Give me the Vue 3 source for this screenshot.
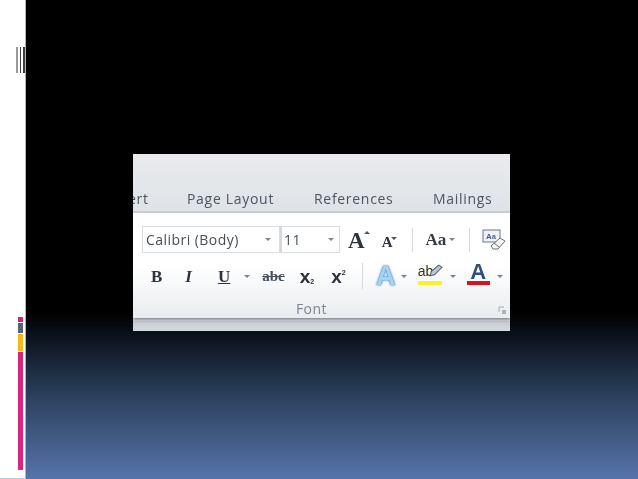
<script setup>
const tabs = [
  { label: 'ert', w: 59 },
  { label: 'Page Layout', w: 127 },
  { label: 'References', w: 119 },
  { label: 'Mailings', w: 70 },
]
</script>

<template>
  <div class="slide">
    <aside class="rail">
      <div class="stripes"><i></i><i></i><i></i></div>
      <div class="bars">
        <i class="b1"></i><i class="b2"></i><i class="b3"></i><i class="b4"></i>
      </div>
    </aside>
    <main class="stage">
      <section class="ribbon">
        <div class="tabs">
          <span v-for="t in tabs" :key="t.label" class="tab" :style="{ width: t.w + 'px' }">{{ t.label }}</span>
        </div>
        <div class="panel">
          <div class="row r1">
            <div class="combo font"><span>Calibri (Body)</span><b class="caret"></b></div>
            <div class="combo size"><span>11</span><b class="caret"></b></div>
            <span class="big grow">A<i class="tri up"></i></span>
            <span class="big shrink">A<i class="tri down"></i></span>
            <i class="sep s1"></i>
            <span class="case">Aa</span><b class="caret c2"></b>
            <i class="sep s2"></i>
            <svg class="eraser" width="24" height="22" viewBox="0 0 24 22">
              <rect x="1" y="1" width="17" height="12" fill="#eef2f7" stroke="#6d7784"/>
              <text x="4" y="10" font-size="8" font-family="Liberation Sans" font-weight="700" fill="#3f5f92">A</text>
              <text x="10" y="10" font-size="7" font-family="Liberation Sans" font-weight="700" fill="#3f5f92">a</text>
              <path d="M9 17 L18 9 L23 12 L16 20 L11 20 Z" fill="#f4f4f4" stroke="#6a7078"/>
              <path d="M12 14 L17 18" stroke="#6a7078"/>
            </svg>
          </div>
          <div class="row r2">
            <span class="fmt bold">B</span>
            <span class="fmt ital">I</span>
            <span class="fmt und">U</span>
            <b class="caret c3"></b>
            <span class="fmt abc">abc</span>
            <span class="fmt sub">x<small>2</small></span>
            <span class="fmt sup">x<small>2</small></span>
            <i class="sep s3"></i>
            <span class="glow">A</span><b class="caret c4"></b>
            <span class="hl"><em>ab</em>
              <svg class="pen" width="15" height="15" viewBox="0 0 14 14"><path d="M2 12 L3 8 L10 2 L13 4 L6 11 Z" fill="#b9c8da" stroke="#56606c"/></svg>
            </span><b class="caret c5"></b>
            <span class="color">A</span><b class="caret c6"></b>
          </div>
          <div class="label">
            <span>Font</span>
            <svg class="launcher" width="9" height="9" viewBox="0 0 9 9"><path d="M1 1H6M1 1V6" stroke="#a4abb3" fill="none"/><path d="M4 4H8V8H4Z" fill="#aab2ba"/></svg>
          </div>
        </div>
        <div class="foot"></div>
      </section>
    </main>
  </div>
</template>

<style>
html, body { margin: 0; background: #fff; overflow: hidden; }
</style>

<style scoped>
.slide { width: 638px; height: 479px; display: flex; background: #fff; font-family: "Open Sans", "Liberation Sans", sans-serif; overflow: hidden; }
.rail { width: 25px; flex: none; display: flex; flex-direction: column; align-items: flex-end; border-right: 1px solid #b4b4b4; border-bottom: 1px solid #b9cde0; box-sizing: content-box; }
.stripes { margin-top: 47px; width: 10px; height: 26px; display: flex; gap: 2px; background: #fff; padding-left: 1px; box-sizing: border-box; }
.stripes i { width: 2px; background: #3b3b3b; }
.stripes i:first-child { background: #9a9a9a; }
.bars { margin-top: 244px; margin-right: 2px; width: 5px; display: flex; flex-direction: column; gap: 1px; }
.bars i { display: block; }
.b1 { height: 5px; background: #d6247e; }
.b2 { height: 10px; background: #56647a; }
.b3 { height: 17px; background: #f6b81a; }
.b4 { height: 118px; background: #d9257d; }
.stage { flex: 1; background: linear-gradient(to bottom, #000 0, #000 312px, #0d1520 340px, #2e4361 400px, #5774aa 479px); padding: 154px 0 0 107px; }
.ribbon { width: 377px; height: 177px; display: flex; flex-direction: column; overflow: hidden; background: #e3e6ea; filter: blur(0.4px); }
.tabs { height: 59px; box-sizing: border-box; padding: 35px 0 0 0; display: flex; background: linear-gradient(to bottom, #e9ebee, #dfe3e7); border-bottom: 2px solid #cdd1d6; color: #4c5560; font-size: 14px; letter-spacing: 0.7px; line-height: 20px; overflow: hidden; flex: none; }
.tab { white-space: nowrap; flex: none; }
.tab:first-child { margin-left: -5px; }
.panel { flex: none; height: 105px; position: relative; box-sizing: border-box; padding: 13px 0 0 9px; background: linear-gradient(to bottom, #fff 0, #fff 50%, #e9ecef 100%); box-shadow: 0 2px 3px rgba(90,95,105,.7); }
.foot { flex: 1; margin-top: 3px; background: linear-gradient(to bottom, #c8ccd1, #d6d9dd); }
.row { display: flex; align-items: center; }
.r1 { height: 27px; }
.r2 { height: 26px; margin-top: 10px; padding-left: 9px; }
.combo { height: 27px; box-sizing: border-box; border: 1px solid #d9dde2; display: flex; align-items: center; justify-content: space-between; background: #fff; color: #454e58; font-size: 14px; letter-spacing: .45px; padding: 0 5px 0 3px; flex: none; }
.font { width: 138px; padding-right: 8px; }
.size { width: 60px; border-left: 2px solid #d4d8dc; padding-left: 2px; }
.caret { display: inline-block; width: 0; height: 0; border-left: 3px solid transparent; border-right: 3px solid transparent; border-top: 3px solid #7b838c; flex: none; }
.big { font-family: "Liberation Serif", serif; font-weight: 700; color: #2c333c; display: flex; align-items: flex-start; line-height: 1; }
.tri { display: block; width: 0; height: 0; border-left: 3px solid transparent; border-right: 3px solid transparent; margin-top: 2px; margin-left: -1px; }
.up { border-bottom: 3px solid #4b5560; }
.down { border-top: 3px solid #4b5560; }
.grow { font-size: 23px; margin-left: 8px; padding-top: 1px; }
.shrink { font-size: 15px; margin-left: 12px; padding-top: 6px; }
.sep { width: 1px; background: #d7dbe0; flex: none; display: block; }
.s1 { height: 24px; margin-left: 15px; }
.case { font-family: "Liberation Serif", serif; font-weight: 700; font-size: 17px; color: #333a44; margin-left: 12px; }
.c2 { margin-left: 3px; }
.s2 { height: 24px; margin-left: 14px; }
.eraser { margin-left: 12px; flex: none; }
.fmt { color: #2c333c; font-family: "Liberation Serif", serif; font-weight: 700; line-height: 1; flex: none; }
.bold { font-size: 17px; }
.ital { font-size: 17px; font-style: italic; margin-left: 23px; }
.und { font-size: 17px; margin-left: 26px; text-decoration: underline; }
.c3 { margin-left: 14px; }
.abc { font-size: 15px; margin-left: 12px; text-decoration: line-through; color: #454d58; }
.sub { margin-left: 15px; font-family: "Liberation Sans", sans-serif; font-size: 19px; }
.sub small { font-size: 7px; vertical-align: -1px; }
.sup { margin-left: 17px; font-family: "Liberation Sans", sans-serif; font-size: 19px; }
.sup small { font-size: 7px; vertical-align: 8px; }
.s3 { height: 26px; margin-left: 16px; }
.glow { margin-left: 12px; width: 22px; text-align: center; font-family: "Liberation Sans", sans-serif; font-weight: 700; font-size: 27px; line-height: 26px; color: #a9d2ef; text-shadow: 0 0 1px #3f8cc8, 0 0 2px #3f8cc8, 0 0 3px #7fbae6; flex: none; }
.c4 { margin-left: 4px; }
.hl { margin-left: 11px; position: relative; width: 24px; height: 22px; display: block; flex: none; align-self: flex-start; }
.hl em { font-style: normal; font-family: "Liberation Sans", sans-serif; font-size: 14px; color: #34340f; display: block; line-height: 14px; padding-top: 1px; height: 17px; border-bottom: 4px solid #f7f12a; }
.pen { position: absolute; left: 10px; top: 0; }
.c5 { margin-left: 8px; }
.color { margin-left: 11px; width: 23px; text-align: center; font-family: "Liberation Sans", sans-serif; font-weight: 700; font-size: 22px; line-height: 18px; color: #2f4f7c; border-bottom: 4px solid #d9121f; display: block; flex: none; align-self: flex-start; }
.c6 { margin-left: 7px; }
.label { position: absolute; left: 0; right: 0; top: 88px; text-align: center; color: #7d858e; font-size: 14px; line-height: 16px; letter-spacing: .5px; padding-right: 20px; box-sizing: border-box; }
.launcher { position: absolute; right: 3px; top: 5px; }
</style>
